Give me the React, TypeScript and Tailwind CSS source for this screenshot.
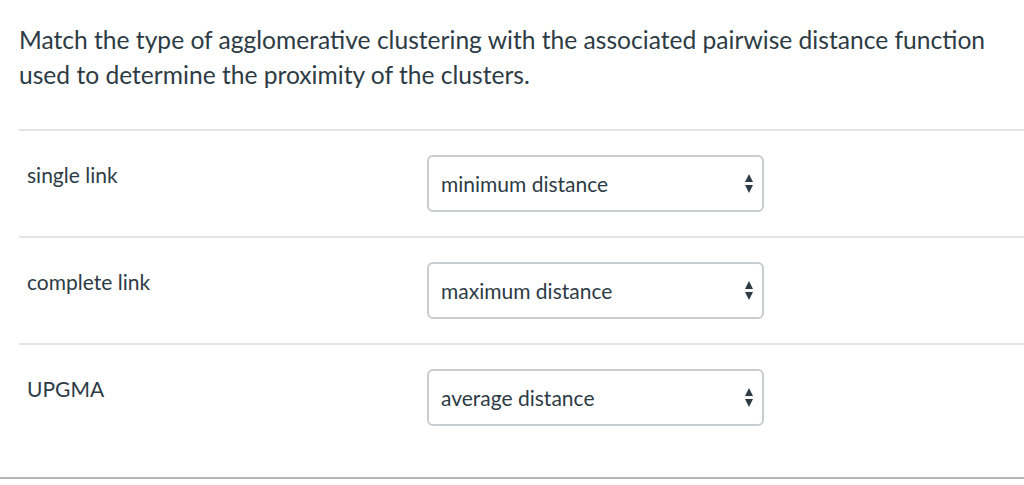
import * as React from 'react';

const ROWS = [
  { label: 'single link', value: 'minimum distance' },
  { label: 'complete link', value: 'maximum distance' },
  { label: 'UPGMA', value: 'average distance' },
];

const Arrows = () => (
  <svg width="8" height="19" viewBox="0 0 8 19" className="shrink-0">
    <polygon points="4,0 8,8 0,8" fill="#2d3b45" />
    <polygon points="0,11 8,11 4,19" fill="#2d3b45" />
  </svg>
);

const Select: React.FC<{ value: string }> = ({ value }) => (
  <div className="w-[337px] h-[57px] border-2 border-[#c7cdd1] rounded-md bg-white flex items-center justify-between pl-[12px] pr-[9px]">
    <span className="text-[21px] text-[#2d3b45]">{value}</span>
    <Arrows />
  </div>
);

export default function App() {
  return (
    <div className="w-[1024px] h-[485px] bg-white overflow-hidden" style={{ fontFamily: 'Lato, "Open Sans", sans-serif' }}>
      <div className="pl-[19px]">
        <p className="pt-[22px] text-[24.6px] leading-[35px] text-[#2d3b45]">
          Match the type of agglomerative clustering with the associated pairwise distance function used to determine the proximity of the clusters.
        </p>
        <div className="mt-[37px]">
          {ROWS.map((row, i) => (
            <div
              key={row.label}
              className={`flex border-t-2 border-[#e2e4e5] pt-[24px] ${i === ROWS.length - 1 ? 'pb-[51px]' : 'pb-[24px]'}`}
            >
              <div className="w-[408px] pl-[8px] pt-[5px] text-[21px] leading-[29px] text-[#2d3b45]">{row.label}</div>
              <Select value={row.value} />
            </div>
          ))}
        </div>
      </div>
      <div className="h-[2px] bg-[#b4b7b9]" />
    </div>
  );
}
